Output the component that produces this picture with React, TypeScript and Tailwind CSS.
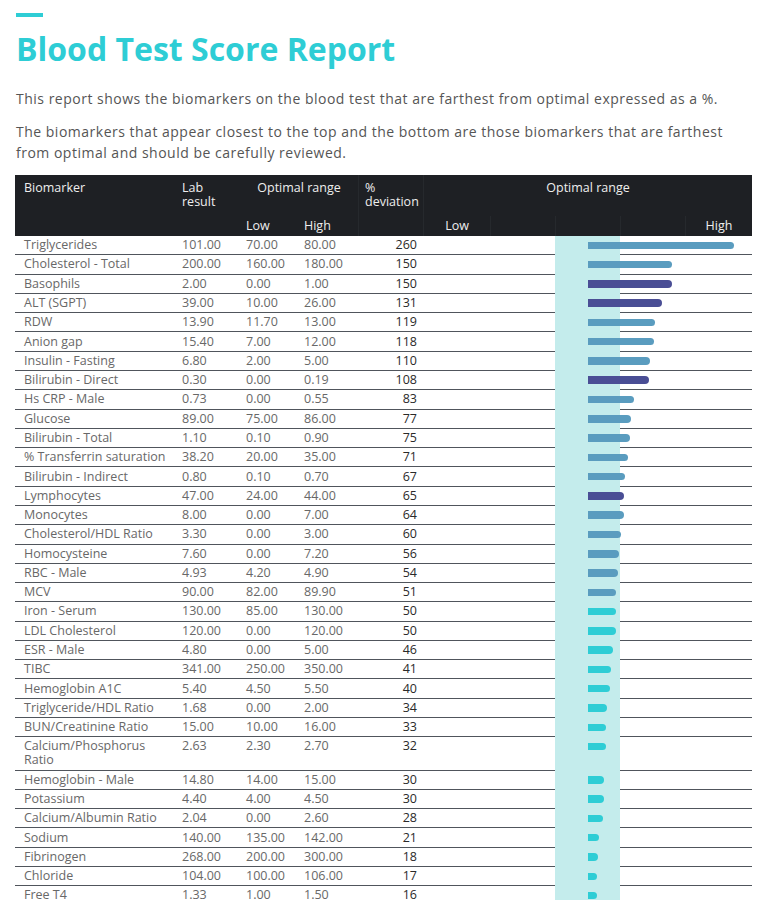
import * as React from 'react';

type Row = {
  name: string;
  lab: string;
  low: string;
  high: string;
  dev: number;
  tone: 'steel' | 'indigo' | 'cyan';
};

const rows: Row[] = [
  { name: 'Triglycerides', lab: '101.00', low: '70.00', high: '80.00', dev: 260, tone: 'steel' },
  { name: 'Cholesterol - Total', lab: '200.00', low: '160.00', high: '180.00', dev: 150, tone: 'steel' },
  { name: 'Basophils', lab: '2.00', low: '0.00', high: '1.00', dev: 150, tone: 'indigo' },
  { name: 'ALT (SGPT)', lab: '39.00', low: '10.00', high: '26.00', dev: 131, tone: 'indigo' },
  { name: 'RDW', lab: '13.90', low: '11.70', high: '13.00', dev: 119, tone: 'steel' },
  { name: 'Anion gap', lab: '15.40', low: '7.00', high: '12.00', dev: 118, tone: 'steel' },
  { name: 'Insulin - Fasting', lab: '6.80', low: '2.00', high: '5.00', dev: 110, tone: 'steel' },
  { name: 'Bilirubin - Direct', lab: '0.30', low: '0.00', high: '0.19', dev: 108, tone: 'indigo' },
  { name: 'Hs CRP - Male', lab: '0.73', low: '0.00', high: '0.55', dev: 83, tone: 'steel' },
  { name: 'Glucose', lab: '89.00', low: '75.00', high: '86.00', dev: 77, tone: 'steel' },
  { name: 'Bilirubin - Total', lab: '1.10', low: '0.10', high: '0.90', dev: 75, tone: 'steel' },
  { name: '% Transferrin saturation', lab: '38.20', low: '20.00', high: '35.00', dev: 71, tone: 'steel' },
  { name: 'Bilirubin - Indirect', lab: '0.80', low: '0.10', high: '0.70', dev: 67, tone: 'steel' },
  { name: 'Lymphocytes', lab: '47.00', low: '24.00', high: '44.00', dev: 65, tone: 'indigo' },
  { name: 'Monocytes', lab: '8.00', low: '0.00', high: '7.00', dev: 64, tone: 'steel' },
  { name: 'Cholesterol/HDL Ratio', lab: '3.30', low: '0.00', high: '3.00', dev: 60, tone: 'steel' },
  { name: 'Homocysteine', lab: '7.60', low: '0.00', high: '7.20', dev: 56, tone: 'steel' },
  { name: 'RBC - Male', lab: '4.93', low: '4.20', high: '4.90', dev: 54, tone: 'steel' },
  { name: 'MCV', lab: '90.00', low: '82.00', high: '89.90', dev: 51, tone: 'steel' },
  { name: 'Iron - Serum', lab: '130.00', low: '85.00', high: '130.00', dev: 50, tone: 'cyan' },
  { name: 'LDL Cholesterol', lab: '120.00', low: '0.00', high: '120.00', dev: 50, tone: 'cyan' },
  { name: 'ESR - Male', lab: '4.80', low: '0.00', high: '5.00', dev: 46, tone: 'cyan' },
  { name: 'TIBC', lab: '341.00', low: '250.00', high: '350.00', dev: 41, tone: 'cyan' },
  { name: 'Hemoglobin A1C', lab: '5.40', low: '4.50', high: '5.50', dev: 40, tone: 'cyan' },
  { name: 'Triglyceride/HDL Ratio', lab: '1.68', low: '0.00', high: '2.00', dev: 34, tone: 'cyan' },
  { name: 'BUN/Creatinine Ratio', lab: '15.00', low: '10.00', high: '16.00', dev: 33, tone: 'cyan' },
  { name: 'Calcium/Phosphorus Ratio', lab: '2.63', low: '2.30', high: '2.70', dev: 32, tone: 'cyan' },
  { name: 'Hemoglobin - Male', lab: '14.80', low: '14.00', high: '15.00', dev: 30, tone: 'cyan' },
  { name: 'Potassium', lab: '4.40', low: '4.00', high: '4.50', dev: 30, tone: 'cyan' },
  { name: 'Calcium/Albumin Ratio', lab: '2.04', low: '0.00', high: '2.60', dev: 28, tone: 'cyan' },
  { name: 'Sodium', lab: '140.00', low: '135.00', high: '142.00', dev: 21, tone: 'cyan' },
  { name: 'Fibrinogen', lab: '268.00', low: '200.00', high: '300.00', dev: 18, tone: 'cyan' },
  { name: 'Chloride', lab: '104.00', low: '100.00', high: '106.00', dev: 17, tone: 'cyan' },
  { name: 'Free T4', lab: '1.33', low: '1.00', high: '1.50', dev: 16, tone: 'cyan' },
];

const toneClass = {
  steel: 'bg-[#5a9cbf]',
  indigo: 'bg-[#4a4e95]',
  cyan: 'bg-[#2ecdd5]',
};

const font = { fontFamily: '"Open Sans", "Liberation Sans", sans-serif' };

function DataRow({ row }: { row: Row }) {
  const cell = 'border-b border-[#50555c] py-[2.15px]';
  return (
    <div className="flex text-[12.5px] leading-[14px] text-[#686868]">
      <div className={`${cell} w-[161px] pl-[9px] pr-2`}>{row.name}</div>
      <div className={`${cell} w-[64px] pl-[6px]`}>{row.lab}</div>
      <div className={`${cell} w-[58px] pl-[6px]`}>{row.low}</div>
      <div className={`${cell} w-[60px] pl-[6px]`}>{row.high}</div>
      <div className={`${cell} w-[65px] pr-[6px] text-right text-[#2a2a2a]`}>{row.dev}</div>
      <div className="relative flex w-[329px]">
        <div className="w-[132px] border-b border-[#50555c]" />
        <div className="w-[65px] bg-[#c4ecec]" />
        <div className="flex-1 border-b border-[#50555c]" />
        <div
          className={`absolute left-[164.5px] top-[5.5px] h-[7.5px] rounded-r-full ${toneClass[row.tone]}`}
          style={{ width: row.dev * 0.565 }}
        />
      </div>
    </div>
  );
}

export default function App() {
  return (
    <div className="min-h-[900px] bg-white pl-[15px] pt-[13px]" style={font}>
      <div className="ml-[1px] h-[4px] w-[27px] bg-[#2ecdd5]" />
      <h1 className="ml-[1px] mt-[14px] text-[32px] font-bold leading-[36px] text-[#2ecdd5]">
        Blood Test Score Report
      </h1>
      <p className="ml-[1px] mt-[21px] text-[14px] leading-[21px] tracking-[0.5px] text-[#555]">
        This report shows the biomarkers on the blood test that are farthest from optimal expressed as a %.
      </p>
      <p className="ml-[1px] mt-[12px] w-[725px] text-[14px] leading-[21px] tracking-[0.5px] text-[#555]">
        The biomarkers that appear closest to the top and the bottom are those biomarkers that are farthest
        from optimal and should be carefully reviewed.
      </p>

      <div className="mt-[12px] w-[737px]">
        {/* header */}
        <div className="flex h-[61px] bg-[#1e2024] text-[12.5px] leading-[14px] text-[#eeeeee]">
          <div className="w-[161px] pl-[9px] pt-[6px]">Biomarker</div>
          <div className="flex w-[182px] flex-col">
            <div className="flex h-[41px]">
              <div className="w-[64px] pl-[6px] pt-[6px]">
                <div>Lab</div>
                <div>result</div>
              </div>
              <div className="flex-1 pt-[6px] text-center">Optimal range</div>
            </div>
            <div className="flex h-[20px] items-center">
              <div className="w-[64px]" />
              <div className="w-[58px] pl-[6px]">Low</div>
              <div className="w-[60px] pl-[6px]">High</div>
            </div>
          </div>
          <div className="w-[65px] border-l border-[#26292d] pl-[6px] pt-[6px]">
            <div>%</div>
            <div>deviation</div>
          </div>
          <div className="flex w-[329px] flex-col border-l border-[#26292d]">
            <div className="h-[41px] pt-[6px] text-center">Optimal range</div>
            <div className="flex h-[20px] items-center">
              <div className="w-[66px] text-center">Low</div>
              <div className="h-full w-[65px] border-l border-[#26292d]" />
              <div className="h-full w-[65px] border-l border-[#26292d]" />
              <div className="h-full w-[65px] border-l border-[#26292d]" />
              <div className="flex h-full flex-1 items-center justify-center border-l border-[#26292d]">High</div>
            </div>
          </div>
        </div>

        {rows.map((r) => (
          <DataRow key={r.name} row={r} />
        ))}
      </div>
    </div>
  );
}
